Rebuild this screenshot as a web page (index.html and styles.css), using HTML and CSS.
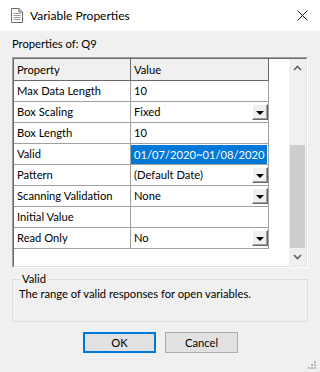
FILE: index.html
```html
<!DOCTYPE html>
<html lang="en">
<head>
<meta charset="UTF-8">
<title>Variable Properties</title>
<link rel="stylesheet" href="styles.css">
</head>
<body>
  <div class="titlebar">
    <svg class="doc-icon" width="12" height="15" viewBox="0 0 12 15">
      <path d="M0.5 0.5h7.5l3.5 3.5v10.5h-11z" fill="#fff" stroke="#6d6d6d"/>
      <path d="M8 0.5v3.5h3.5" fill="none" stroke="#6d6d6d"/>
      <path d="M2.5 5.5h7M2.5 7.5h7M2.5 9.5h7M2.5 11.5h7" stroke="#9a9a9a"/>
    </svg>
    <span class="title">Variable Properties</span>
    <svg class="close" width="11" height="11" viewBox="0 0 11 11">
      <path d="M0.5 0.5l10 10M10.5 0.5l-10 10" stroke="#111" stroke-width="1"/>
    </svg>
  </div>

  <div class="dialog">
    <div class="caption">Properties of: Q9</div>

    <div class="grid-box">
      <div class="grid-inner">
        <div class="props">
          <div class="cell head">Property</div>
          <div class="cell head">Value</div>

          <div class="cell">Max Data Length</div>
          <div class="cell">10</div>

          <div class="cell">Box Scaling</div>
          <div class="cell combo">Fixed<span class="drop"></span></div>

          <div class="cell">Box Length</div>
          <div class="cell">10</div>

          <div class="cell">Valid</div>
          <div class="cell edit"><span class="selected">01/07/2020~01/08/2020</span></div>

          <div class="cell">Pattern</div>
          <div class="cell combo">(Default Date)<span class="drop"></span></div>

          <div class="cell">Scanning Validation</div>
          <div class="cell combo">None<span class="drop"></span></div>

          <div class="cell">Initial Value</div>
          <div class="cell"></div>

          <div class="cell">Read Only</div>
          <div class="cell combo">No<span class="drop"></span></div>
        </div>
        <div class="spacer"></div>
        <div class="vscroll">
          <svg class="arrow" width="9" height="6" viewBox="0 0 9 6"><path d="M1 5l3.5-3.5L8 5" fill="none" stroke="#606060" stroke-width="1.6"/></svg>
          <div class="track"><div class="thumb"></div></div>
          <svg class="arrow" width="9" height="6" viewBox="0 0 9 6"><path d="M1 1l3.5 3.5L8 1" fill="none" stroke="#606060" stroke-width="1.6"/></svg>
        </div>
      </div>
    </div>

    <fieldset class="group">
      <legend>Valid</legend>
      <p class="desc">The range of valid responses for open variables.</p>
    </fieldset>

    <div class="buttons">
      <button class="btn default">OK</button>
      <button class="btn">Cancel</button>
    </div>
  </div>

  <svg class="grip" width="10" height="10" viewBox="0 0 10 10">
    <rect x="7" y="1" width="2" height="2" fill="#b8b8b8"/>
    <rect x="4" y="4" width="2" height="2" fill="#b8b8b8"/>
    <rect x="7" y="4" width="2" height="2" fill="#b8b8b8"/>
    <rect x="1" y="7" width="2" height="2" fill="#b8b8b8"/>
    <rect x="4" y="7" width="2" height="2" fill="#b8b8b8"/>
    <rect x="7" y="7" width="2" height="2" fill="#b8b8b8"/>
  </svg>
</body>
</html>
```

FILE: styles.css
```css
body {
  margin: 0;
  width: 320px;
  height: 372px;
  background: #f0f0f0;
  font-family: 'Segoe UI', Lato, sans-serif;
  font-size: 11.2px;
  color: #000;
  position: relative;
  overflow: hidden;
}
.titlebar {
  height: 31px;
  background: #fff;
  display: flex;
  align-items: center;
  padding: 0 11px 0 11px;
}
.doc-icon {
  margin-right: 7px;
}
.title {
  flex: 1;
  font-size: 12px;
}
.close {
  margin-right: 1px;
}
.dialog {
  padding: 0 12px;
}
.caption {
  height: 16px;
  line-height: 16px;
  margin: 5px 0 5px 0;
}
.grid-box {
  border: 1px solid;
  border-color: #a0a0a0 #fff #fff #a0a0a0;
}
.grid-inner {
  border: 1px solid;
  border-color: #696969 #e3e3e3 #e3e3e3 #696969;
  background: #fff;
  height: 207px;
  display: flex;
}
.props {
  display: grid;
  grid-template-columns: 117px 138px;
  grid-template-rows: 22px;
  grid-auto-rows: 21px;
  align-self: flex-start;
}
.cell {
  border-right: 1px solid #a0a0a0;
  border-bottom: 1px solid #a0a0a0;
  padding: 0 3px;
  line-height: 20px;
  white-space: nowrap;
  overflow: hidden;
  display: flex;
  align-items: center;
}
.cell.head {
  background: #f0f0f0;
  border-color: #696969;
  line-height: 21px;
}
.combo {
  justify-content: space-between;
  padding-right: 0;
}
.drop {
  width: 14px;
  height: 14px;
  background: #f0f0f0;
  border: 1px solid;
  border-color: #fff #696969 #696969 #fff;
  box-shadow: inset -1px -1px 0 #a0a0a0;
  display: flex;
  align-items: center;
  justify-content: center;
}
.drop::after {
  content: "";
  border-left: 4px solid transparent;
  border-right: 4px solid transparent;
  border-top: 4px solid #000;
  margin-top: 1px;
}
.edit {
  padding: 0 1px 0 0;
}
.selected {
  display: block;
  flex: 1;
  background: #0078d7;
  color: #fff;
  line-height: 19px;
  padding-left: 3px;
}
.spacer {
  flex: 1;
}
.vscroll {
  width: 17px;
  background: #f0f0f0;
  display: flex;
  flex-direction: column;
  align-items: center;
}
.arrow {
  margin: 6px 0;
}
.track {
  flex: 1;
  width: 100%;
  display: flex;
  flex-direction: column;
  justify-content: flex-end;
}
.thumb {
  height: 103px;
  background: #cdcdcd;
  margin: 0 1px;
}
.group {
  margin: 5px 0 0 0;
  padding: 0 6px 0 6px;
  border: 1px solid #dcdcdc;
  height: 47px;
}
.group legend {
  padding: 0 2px;
  margin-left: 1px;
  line-height: 12px;
}
.desc {
  margin: 1px 0 0 0;
  line-height: 16px;
}
.buttons {
  display: flex;
  justify-content: center;
  gap: 9px;
  margin-top: 10px;
  padding-left: 1px;
}
.btn {
  width: 73px;
  height: 21px;
  background: #e1e1e1;
  border: 1px solid #adadad;
  font-family: inherit;
  font-size: 11.2px;
  padding: 0;
  color: #000;
}
.btn.default {
  border: 2px solid #0078d7;
}
.grip {
  position: absolute;
  right: 3px;
  bottom: 2px;
}
```
